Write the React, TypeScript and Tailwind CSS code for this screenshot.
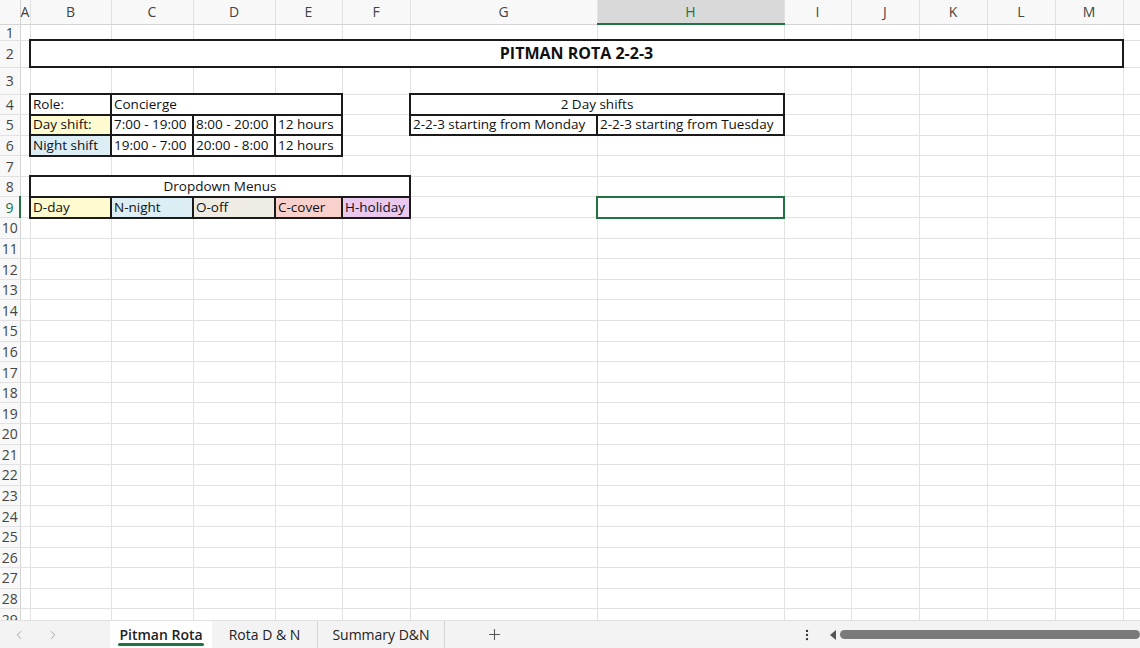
import { ChevronLeft, ChevronRight, Plus, MoreVertical } from 'lucide-react'

const cols = [
  { n: 'A', w: 10 }, { n: 'B', w: 81 }, { n: 'C', w: 82 }, { n: 'D', w: 82 }, { n: 'E', w: 67 },
  { n: 'F', w: 68 }, { n: 'G', w: 187 }, { n: 'H', w: 187 }, { n: 'I', w: 67 }, { n: 'J', w: 68 },
  { n: 'K', w: 68 }, { n: 'L', w: 68 }, { n: 'M', w: 68 }, { n: '', w: 40 },
]

type Cell = { c: number; span?: number; t?: string; cls?: string }

const B = 'border-[2px] border-[#1a1a1a]'

const content: Record<number, Cell[]> = {
  2: [{ c: 1, span: 12, t: 'PITMAN ROTA 2-2-3', cls: `${B} text-center font-bold text-[16px]` }],
  4: [
    { c: 1, t: 'Role:', cls: B },
    { c: 2, span: 3, t: 'Concierge', cls: B },
    { c: 6, span: 2, t: '2 Day shifts', cls: `${B} text-center` },
  ],
  5: [
    { c: 1, t: 'Day shift:', cls: `${B} bg-[#fdfbcf]` },
    { c: 2, t: '7:00 - 19:00', cls: B },
    { c: 3, t: '8:00 - 20:00', cls: B },
    { c: 4, t: '12 hours', cls: B },
    { c: 6, t: '2-2-3 starting from Monday', cls: B },
    { c: 7, t: '2-2-3 starting from Tuesday', cls: B },
  ],
  6: [
    { c: 1, t: 'Night shift', cls: `${B} bg-[#dcedf4]` },
    { c: 2, t: '19:00 - 7:00', cls: B },
    { c: 3, t: '20:00 - 8:00', cls: B },
    { c: 4, t: '12 hours', cls: B },
  ],
  8: [{ c: 1, span: 5, t: 'Dropdown Menus', cls: `${B} text-center` }],
  9: [
    { c: 1, t: 'D-day', cls: `${B} bg-[#fdfbcf]` },
    { c: 2, t: 'N-night', cls: `${B} bg-[#dcedf4]` },
    { c: 3, t: 'O-off', cls: `${B} bg-[#eeece3]` },
    { c: 4, t: 'C-cover', cls: `${B} bg-[#f8d0cc]` },
    { c: 5, t: 'H-holiday', cls: `${B} bg-[#ebc8ee]` },
    { c: 7, cls: 'border-[2px] border-[#217346]' },
  ],
}

const rowH = (r: number) => (r === 1 ? 'h-[16px]' : r === 2 ? 'h-[27px]' : r === 3 ? 'h-[27px]' : 'h-[20.6px]')

function Row({ r }: { r: number }) {
  const cells = content[r] ?? []
  const out = []
  let c = 0
  while (c < cols.length) {
    const cell = cells.find((x) => x.c === c)
    if (cell) {
      out.push(
        <td key={c} colSpan={cell.span ?? 1}
          className={`p-0 px-[2px] whitespace-nowrap overflow-hidden ${cell.cls ?? 'border border-[#e2e2e2]'}`}>
          {cell.t}
        </td>,
      )
      c += cell.span ?? 1
    } else {
      out.push(<td key={c} className="p-0 border border-[#e2e2e2]" />)
      c++
    }
  }
  return (
    <tr className={rowH(r)}>
      <td className={`p-0 text-center text-[14px] text-[#444] bg-[#f8f8f8] border-b border-[#e2e2e2] ${r === 9 ? 'border-r-2 border-r-[#217346] text-[#217346]' : 'border-r border-r-[#d4d4d4]'}`}>
        {r}
      </td>
      {out}
    </tr>
  )
}

export default function App() {
  const rows = Array.from({ length: 29 }, (_, i) => i + 1)
  return (
    <div className="w-[1140px] h-[648px] overflow-hidden bg-white flex flex-col" style={{ fontFamily: '"Open Sans", Lato, sans-serif' }}>
      <div className="flex-1 overflow-hidden">
        <table className="border-collapse table-fixed text-[13.5px] leading-[15px] text-[#111]" style={{ width: 20 + cols.reduce((a, b) => a + b.w, 0) }}>
          <colgroup>
            <col style={{ width: 20 }} />
            {cols.map((c, i) => <col key={i} style={{ width: c.w }} />)}
          </colgroup>
          <thead>
            <tr className="h-[24px] text-[14px] text-[#444]">
              <th className="p-0 bg-[#f8f8f8] border-b border-r border-[#d4d4d4]" />
              {cols.map((c, i) => (
                <th key={i}
                  className={`p-0 font-normal border-r border-[#e2e2e2] ${c.n === 'A' ? 'text-left' : 'text-center'} ${c.n === 'H' ? 'bg-[#d9d9d9] text-[#217346] border-b-2 border-b-[#217346]' : 'bg-[#f8f8f8] border-b border-b-[#d4d4d4]'}`}>
                  {c.n}
                </th>
              ))}
            </tr>
          </thead>
          <tbody>
            {rows.map((r) => <Row key={r} r={r} />)}
          </tbody>
        </table>
      </div>
      <div className="h-[28px] bg-[#f3f3f3] flex items-center text-[14px] text-[#222] border-t border-[#e0e0e0]" style={{ fontFamily: '"Open Sans", sans-serif' }}>
        <div className="flex items-center gap-5 pl-3 w-[110px] text-[#999]">
          <ChevronLeft size={14} strokeWidth={1.5} />
          <ChevronRight size={14} strokeWidth={1.5} />
        </div>
        <div className="h-full w-[102px] flex items-center justify-center bg-white relative">
          <span className="font-semibold">Pitman Rota</span>
          <div className="absolute left-2 right-2 bottom-[2px] h-[3px] bg-[#217346] rounded" />
        </div>
        <div className="h-full w-[106px] flex items-center justify-center border-r border-[#d4d4d4]">Rota D &amp; N</div>
        <div className="h-full w-[127px] flex items-center justify-center border-r border-[#d4d4d4]">Summary D&amp;N</div>
        <div className="w-[98px] flex justify-center text-[#555]"><Plus size={17} strokeWidth={1.5} /></div>
        <div className="flex-1" />
        <MoreVertical size={14} className="text-[#333] mr-4" />
        <div className="flex items-center gap-1 w-[310px]">
          <div className="w-0 h-0 border-y-[5px] border-y-transparent border-r-[6px] border-r-[#555]" />
          <div className="flex-1 h-[9px] rounded-full bg-[#7a7a7a]" />
        </div>
      </div>
    </div>
  )
}
